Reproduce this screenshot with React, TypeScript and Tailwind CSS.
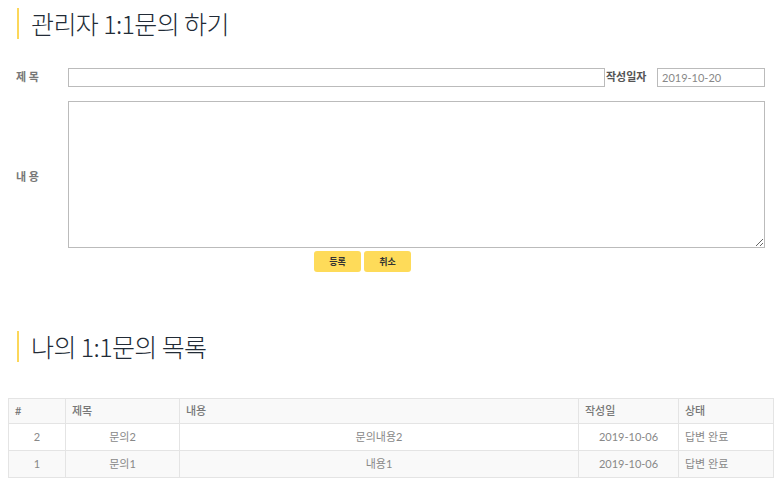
const rows = [
  { id: 2, title: '문의2', content: '문의내용2', date: '2019-10-06', status: '답변 완료' },
  { id: 1, title: '문의1', content: '내용1', date: '2019-10-06', status: '답변 완료' },
];

function SectionTitle({ children }: { children: string }) {
  return (
    <div className="flex items-center h-[31px] ml-[17px]">
      <div className="w-[2px] h-full bg-[#fcd75a]" />
      <h2
        className="ml-[12px] text-[25px] leading-none font-light text-[#222b36] tracking-[-0.6px]"
        style={{ fontFamily: '"Noto Sans CJK KR", sans-serif' }}
      >
        {children}
      </h2>
    </div>
  );
}

export default function App() {
  return (
    <div
      className="w-[780px] h-[490px] bg-white overflow-hidden pt-[8px]"
      style={{ fontFamily: 'Lato, "Noto Sans CJK KR", sans-serif' }}
    >
      <SectionTitle>관리자 1:1문의 하기</SectionTitle>

      {/* 문의 작성 폼 */}
      <div className="mt-[29px]">
        <div className="flex items-center">
          <label className="w-[68px] pl-[16px] text-[11px] font-semibold text-[#777]">제 목</label>
          <input className="w-[537px] h-[19px] border border-[#bbb] outline-none" />
          <span className="w-[52px] text-[11px] font-bold text-[#555] pl-[1px]">작성일자</span>
          <input
            readOnly
            value="2019-10-20"
            className="w-[108px] h-[19px] border border-[#bbb] px-[4px] text-[11px] text-[#888] outline-none"
          />
        </div>
        <div className="flex items-center mt-[14px]">
          <label className="w-[68px] pl-[16px] pt-[6px] text-[11px] font-semibold text-[#777]">내 용</label>
          <textarea className="w-[697px] h-[147px] border border-[#bbb] outline-none resize" />
        </div>
        <div className="flex gap-[3px] mt-[3px] ml-[314px]">
          <button type="button" className="w-[47px] h-[21px] rounded-[3px] bg-[#fedb59] text-[9px] font-bold text-[#333]">
            등록
          </button>
          <button type="button" className="w-[47px] h-[21px] rounded-[3px] bg-[#fedb59] text-[9px] font-bold text-[#333]">
            취소
          </button>
        </div>
      </div>

      <div className="mt-[59px]">
        <SectionTitle>나의 1:1문의 목록</SectionTitle>
      </div>

      {/* 문의 목록 */}
      <table className="ml-[8px] mt-[36px] w-[766px] border-collapse text-[11px] text-[#888]">
        <thead>
          <tr className="bg-[#f9f9f9] h-[25px]">
            <th className="w-[57px] border border-[#e4e4e4] text-left pl-[6px] font-medium text-[#777]">#</th>
            <th className="w-[114px] border border-[#e4e4e4] text-left pl-[6px] font-medium text-[#777]">제목</th>
            <th className="border border-[#e4e4e4] text-left pl-[6px] font-medium text-[#777]">내용</th>
            <th className="w-[100px] border border-[#e4e4e4] text-left pl-[6px] font-medium text-[#777]">작성일</th>
            <th className="w-[95px] border border-[#e4e4e4] text-left pl-[6px] font-medium text-[#777]">상태</th>
          </tr>
        </thead>
        <tbody>
          {rows.map((r, i) => (
            <tr key={r.id} className={i % 2 === 1 ? 'bg-[#f9f9f9] h-[27px]' : 'bg-white h-[27px]'}>
              <td className="border border-[#e4e4e4] text-center">{r.id}</td>
              <td className="border border-[#e4e4e4] text-center">{r.title}</td>
              <td className="border border-[#e4e4e4] text-center">{r.content}</td>
              <td className="border border-[#e4e4e4] text-center">{r.date}</td>
              <td className="border border-[#e4e4e4] text-left pl-[6px]">{r.status}</td>
            </tr>
          ))}
        </tbody>
      </table>
    </div>
  );
}
